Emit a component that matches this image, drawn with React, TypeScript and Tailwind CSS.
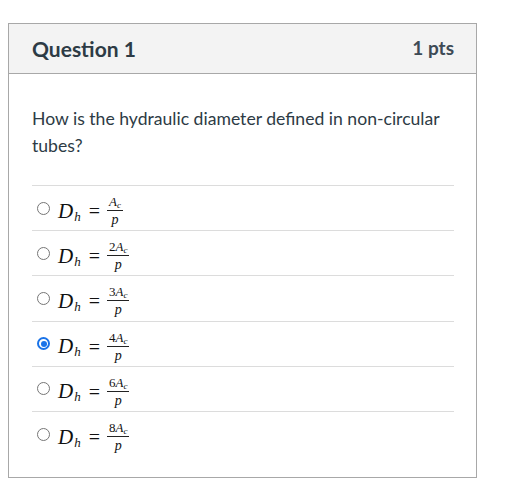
import React from "react";

const answers = ["", "2", "3", "4", "6", "8"];

const Radio: React.FC<{ checked: boolean }> = ({ checked }) =>
  checked ? (
    <span className="flex h-[13px] w-[13px] shrink-0 items-center justify-center rounded-full border-[2px] border-[#1a73e8] bg-white">
      <span className="h-[6px] w-[6px] rounded-full bg-[#1a73e8]" />
    </span>
  ) : (
    <span className="h-[13px] w-[13px] shrink-0 rounded-full border border-[#767676] bg-white" />
  );

const Formula: React.FC<{ coef: string }> = ({ coef }) => (
  <span className="mt-[6px] flex items-center font-['Liberation_Serif','Times_New_Roman',serif] text-[#111]">
    <span className="text-[21px] italic leading-none">D</span>
    <span className="relative top-[5px] ml-[1px] text-[13px] italic leading-none">h</span>
    <span className="ml-[8px] mr-[7px] text-[20px] leading-none">=</span>
    <span className="flex flex-col items-center">
      <span className="px-[2px] pb-[2px] text-[13px] leading-none">
        {coef}
        <span className="italic">A</span>
        <span className="relative top-[2px] text-[9px] italic">c</span>
      </span>
      <span className="h-[1px] w-full bg-[#222]" />
      <span className="pt-[2px] text-[14px] italic leading-none">p</span>
    </span>
  </span>
);

export default function App() {
  return (
    <div className="bg-white pl-[8px] pt-[23px] font-['Lato','Open_Sans',sans-serif]">
      <div className="w-[469px] border border-[#a8a8a8] text-[#2d3b45]">
        <div className="flex h-[50px] items-center justify-between border-b border-[#a8a8a8] bg-[#f3f3f3] pl-[23px] pr-[22px]">
          <span className="text-[21px] font-bold">Question 1</span>
          <span className="text-[19px] font-bold text-[#3d4a55]">1 pts</span>
        </div>
        <div className="pb-[21px] pl-[23px] pr-[22px] pt-[31px]">
          <p className="text-[17.6px] leading-[27px]">
            How is the hydraulic diameter defined in non-circular tubes?
          </p>
          <div className="mt-[26px]">
            {answers.map((c, i) => (
              <div
                key={i}
                className="flex h-[45.2px] items-center gap-[8px] border-t border-[#dcdcdc] pl-[5px]"
              >
                <Radio checked={i === 3} />
                <Formula coef={c} />
              </div>
            ))}
          </div>
        </div>
      </div>
    </div>
  );
}
